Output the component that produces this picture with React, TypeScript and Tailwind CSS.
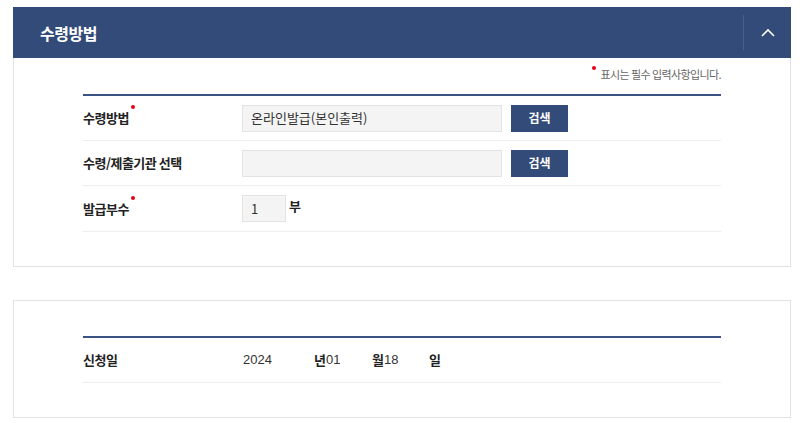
import React from 'react';

const font = { fontFamily: '"Noto Sans CJK KR", "Noto Sans", sans-serif' };

function RequiredDot() {
    return <span className="absolute -right-[6px] -top-[3px] w-[4px] h-[4px] rounded-full bg-[#e60012]" />;
}

export default function App() {
    return (
        <div className="min-h-[423px] bg-white pt-[7px] pl-[13px]" style={font}>
            <div className="w-[778px]">
                {/* Header */}
                <div className="h-[51px] bg-[#334b78] flex items-center">
                    <h2 className="flex-1 pl-[27px] text-white text-[16px] font-bold tracking-[-0.5px]">수령방법</h2>
                    <div className="h-[35px] w-px bg-[#485f8b]" />
                    <button className="w-[47px] h-full flex items-center justify-center">
                        <svg width="14" height="9" viewBox="0 0 14 9" fill="none">
                            <polyline points="1,8 7,2 13,8" stroke="#ffffff" strokeWidth="1.6" />
                        </svg>
                    </button>
                </div>

                {/* Body 1 */}
                <div className="border-x border-b border-[#e2e2e2] px-[69px] pt-[8px] pb-[34px]">
                    <p className="relative h-[16px] leading-[16px] text-right text-[11px] text-[#666666] tracking-[-0.6px] mb-[12px]">
                        <span className="relative inline-block">
                            <span className="absolute -left-[9px] top-[0px] w-[4px] h-[4px] rounded-full bg-[#e60012]" />
                            표시는 필수 입력사항입니다.
                        </span>
                    </p>
                    <div className="border-t-2 border-[#3a5384]">
                        <div className="h-[45px] flex items-center border-b border-[#eeeeee]">
                            <div className="w-[159px] text-[13px] font-bold text-[#222222] tracking-[-0.5px]">
                                <span className="relative">수령방법<RequiredDot /></span>
                            </div>
                            <div className="w-[260px] h-[27px] bg-[#f4f4f4] border border-[#e3e3e3] flex items-center px-[8px] text-[13px] text-[#333333]">
                                온라인발급(본인출력)
                            </div>
                            <button className="ml-[9px] w-[57px] h-[27px] bg-[#334b78] text-white text-[12px] font-bold">검색</button>
                        </div>
                        <div className="h-[45px] flex items-center border-b border-[#eeeeee]">
                            <div className="w-[159px] text-[13px] font-bold text-[#222222] tracking-[-0.5px]">수령/제출기관 선택</div>
                            <div className="w-[260px] h-[27px] bg-[#f4f4f4] border border-[#e3e3e3]" />
                            <button className="ml-[9px] w-[57px] h-[27px] bg-[#334b78] text-white text-[12px] font-bold">검색</button>
                        </div>
                        <div className="h-[46px] flex items-center border-b border-[#eeeeee]">
                            <div className="w-[159px] text-[13px] font-bold text-[#222222] tracking-[-0.5px]">
                                <span className="relative">발급부수<RequiredDot /></span>
                            </div>
                            <div className="w-[44px] h-[27px] bg-[#f4f4f4] border border-[#e3e3e3] flex items-center px-[8px] text-[13px] text-[#333333]">
                                1
                            </div>
                            <span className="ml-[3px] -mt-[6px] text-[13px] font-bold text-[#222222]">부</span>
                        </div>
                    </div>
                </div>

                {/* Body 2 */}
                <div className="mt-[33px] border border-[#e2e2e2] px-[69px] pt-[35px] pb-[34px]">
                    <div className="border-t-2 border-[#3a5384]">
                        <div className="h-[45px] flex items-center border-b border-[#eeeeee] text-[13px]">
                            <div className="w-[160px] font-bold text-[#222222] tracking-[-0.5px]">신청일</div>
                            <span className="w-[71px] text-[#333333]" style={{ fontFamily: '"Liberation Sans", sans-serif' }}>2024</span>
                            <span className="font-bold text-[#222222]">년</span>
                            <span className="w-[46px] text-[#333333]" style={{ fontFamily: '"Liberation Sans", sans-serif' }}>01</span>
                            <span className="font-bold text-[#222222]">월</span>
                            <span className="w-[45px] text-[#333333]" style={{ fontFamily: '"Liberation Sans", sans-serif' }}>18</span>
                            <span className="font-bold text-[#222222]">일</span>
                        </div>
                    </div>
                </div>
            </div>
        </div>
    );
}
